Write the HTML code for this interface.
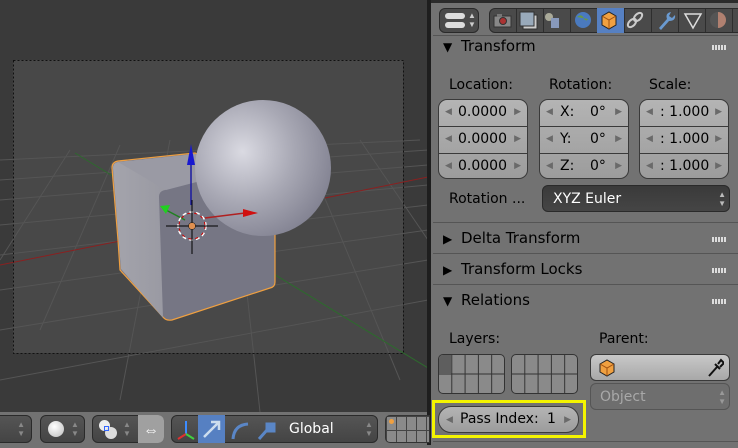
<!DOCTYPE html>
<html><head><style>
*{margin:0;padding:0;box-sizing:border-box}
body{width:738px;height:445px;overflow:hidden;background:#727272;font-family:"Liberation Sans","DejaVu Sans",sans-serif;position:relative}
.a{position:absolute}
.t{font-family:"DejaVu Sans","Liberation Sans",sans-serif;color:#000;font-size:14px}
.fld{position:absolute;background:linear-gradient(#b4b4b4,#9c9c9c);border:1px solid #3a3a3a;border-radius:9px;overflow:hidden}
.fld div{position:absolute;left:0;right:0;height:26px;border-top:1px solid #3a3a3a;font-family:"DejaVu Sans",sans-serif;font-size:14px;line-height:25px;color:#000}
.fld div:first-child{border-top:none}
.ar{position:absolute;color:#6a6a6a;font-size:9px}
.hdr{position:absolute;left:443px;font-family:"DejaVu Sans",sans-serif;font-size:15px;color:#000}
.hdr b{display:inline-block;width:18px;font-weight:normal;font-size:12px}
.grip{position:absolute;right:12px;width:14px;height:5px;background:repeating-linear-gradient(90deg,#ddd 0 2px,transparent 2px 3px)}
.sep{position:absolute;left:433px;right:0;height:1px;background:#555}
.btn{position:absolute;top:415px;height:28px;background:linear-gradient(#555,#444);border:1px solid #2a2a2a;border-radius:6px}
</style></head><body>
<svg class="a" style="left:0;top:0" width="428" height="445" viewBox="0 0 428 445">
<defs>
<radialGradient id="sp" cx="0.35" cy="0.38" r="0.75"><stop offset="0" stop-color="#dadae2"/><stop offset="0.5" stop-color="#a8a8b4"/><stop offset="1" stop-color="#7c7c8c"/></radialGradient>
<linearGradient id="cf" x1="0" x2="1"><stop offset="0" stop-color="#a4a4ac"/><stop offset="1" stop-color="#8c8c96"/></linearGradient>
</defs>
<rect width="428" height="445" fill="#3a3a3a"/>
<rect x="13" y="60" width="390" height="293" fill="#484848"/>
<g stroke="#555" stroke-width="1" fill="none">
<path d="M0 160L420 140M0 180L428 150M0 200L428 165M0 225L428 185M0 255L428 205M0 290L428 230M0 330L428 260M0 380L428 300"/>
<path d="M70 150L0 260M120 145L40 330M170 140L120 400M230 138L260 412M300 138L400 380M360 140L428 240"/>
</g>
<path d="M0 265L135 238M325 198L428 177" stroke="#8a2020" stroke-width="1"/>
<path d="M75 153L428 368" stroke="#2d6a2d" stroke-width="1"/>
<rect x="13.5" y="60.5" width="390" height="293" fill="none" stroke="#111" stroke-dasharray="2,2"/>
<path d="M112 168Q112 162 118 161L195 153L275 195L275 282Q275 287 270 288L172 320Q166 321 163 317L120 270L118 240Z" fill="#767684" stroke="#f0a040" stroke-width="1.2"/>
<path d="M113 168Q113 163 118 162L195 154L230 170L165 190Q159 191 159 197L163 318L121 269Z" fill="url(#cf)"/>
<path d="M118 162L195 154L235 172L166 190Z" fill="#9a9aa4"/>
<circle cx="263" cy="168" r="68" fill="url(#sp)"/>
<line x1="191" y1="163" x2="191" y2="205" stroke="#1a1aa0" stroke-width="1.5"/>
<path d="M187 165L191 144L195 165Z" fill="#1818d0"/>
<line x1="205" y1="218" x2="245" y2="213" stroke="#b02020" stroke-width="1.5"/>
<path d="M243 209L258 213L243 217Z" fill="#d01010"/>
<line x1="166" y1="210" x2="185" y2="220" stroke="#208020" stroke-width="1.5"/>
<path d="M160 206L170 205L166 214Z" fill="#20d020"/>
<circle cx="192" cy="226" r="14" fill="none" stroke="#fff" stroke-width="1.5" stroke-dasharray="4,3"/>
<circle cx="192" cy="226" r="13" fill="none" stroke="#c00" stroke-width="1" stroke-dasharray="3,4"/>
<path d="M166 226H218M192 200V254" stroke="#000" stroke-width="1"/>
<circle cx="192" cy="226" r="3.5" fill="#e09050" stroke="#000" stroke-width="0.5"/>
<rect x="0" y="412" width="428" height="33" fill="#727272"/>
</svg>
<div class="a" style="left:427px;top:0;width:4px;height:445px;background:#1e1e1e"></div>
<div class="a" style="left:431px;top:0;width:307px;height:3px;background:#2b2b2b"></div>
<div class="btn" style="left:-8px;width:40px"><span class="a" style="right:6px;top:4px;color:#888;font-size:8px;line-height:9px">▲<br>▼</span></div>
<div class="btn" style="left:40px;width:45px"><div class="a" style="left:7px;top:5px;width:16px;height:16px;border-radius:50%;background:radial-gradient(circle at 40% 35%,#fff,#bbb)"></div><span class="a" style="left:30px;top:4px;color:#888;font-size:8px;line-height:9px">▲<br>▼</span></div>
<div class="btn" style="left:92px;width:72px"><div class="a" style="left:6px;top:4px;width:11px;height:11px;border-radius:50%;background:#eee"></div><div class="a" style="left:12px;top:11px;width:12px;height:12px;border-radius:50%;background:#ddd"></div><div class="a" style="left:11px;top:10px;width:5px;height:5px;border:1px solid #36f"></div><span class="a" style="left:30px;top:4px;color:#888;font-size:8px;line-height:9px">▲<br>▼</span><div class="a" style="left:45px;top:-1px;width:26px;height:28px;background:#a0a0a0;border-radius:0 6px 6px 0;color:#fff;font-size:16px;text-align:center;line-height:32px">⇔</div></div>
<div class="btn" style="left:171px;width:207px">
<svg class="a" style="left:2px;top:3px" width="24" height="22"><path d="M12 2V15" stroke="#3c8cff" stroke-width="2"/><path d="M12 15L4 20" stroke="#e03030" stroke-width="2"/><path d="M12 15L20 20" stroke="#40d040" stroke-width="2"/></svg>
<div class="a" style="left:26px;top:-1px;width:27px;height:28px;background:#5680c2"><svg width="27" height="28"><path d="M6 22L20 8M13 7H21V15" stroke="#cde" stroke-width="2.5" fill="none"/></svg></div>
<svg class="a" style="left:56px;top:3px" width="24" height="22"><path d="M5 20Q6 6 20 5" stroke="#5a86c6" stroke-width="3" fill="none"/></svg>
<svg class="a" style="left:82px;top:3px" width="24" height="22"><path d="M5 20L13 11V5H20V12H13" stroke="#5a86c6" stroke-width="3" fill="#5a86c6"/></svg>
<span class="a t" style="left:117px;top:5px;color:#fff;font-size:14px">Global</span><span class="a" style="left:193px;top:4px;color:#888;font-size:8px;line-height:9px">▲<br>▼</span></div>
<div class="a" style="left:385px;top:415px;width:45px;height:28px;background:#8a8a8a;border:1px solid #333;border-radius:5px 0 0 5px;background-image:linear-gradient(90deg,#444 1px,transparent 1px),linear-gradient(#444 1px,transparent 1px);background-size:10px 14px"><div class="a" style="left:3px;top:3px;width:5px;height:5px;background:#f0a040;border-radius:50%"></div></div>
<div class="a" style="left:439px;top:8px;width:40px;height:25px;background:#4a4a4a;border:1px solid #2a2a2a;border-radius:6px"><div class="a" style="left:5px;top:4px;width:20px;height:6px;border-radius:3px;background:#ddd"></div><div class="a" style="left:5px;top:13px;width:20px;height:6px;border-radius:3px;background:#ddd"></div><span class="a" style="left:28px;top:2px;color:#ccc;font-size:8px;line-height:9px">▲<br>▼</span></div>
<div class="a" style="left:489px;top:8px;width:260px;height:25px;background:#4a4a4a;border:1px solid #2a2a2a;border-radius:6px 0 0 6px;background-image:linear-gradient(90deg,transparent 26px,#2e2e2e 26px,#2e2e2e 27px);background-size:27px 25px"></div>
<div class="a" style="left:597px;top:8px;width:27px;height:25px;background:#5680c2"></div>
<svg class="a" style="left:489px;top:8px" width="249" height="25">
<rect x="5" y="8" width="17" height="11" fill="#888" stroke="#333"/><rect x="8" y="6" width="5" height="3" fill="#777"/><circle cx="14" cy="13" r="3.5" fill="#a33" stroke="#333"/>
<rect x="34" y="7" width="14" height="14" fill="#ccc" stroke="#333"/><rect x="31" y="4" width="14" height="14" fill="#9ab" stroke="#333"/>
<circle cx="60" cy="9" r="4" fill="#aa9"/><rect x="62" y="10" width="8" height="10" fill="#89b"/>
<circle cx="94" cy="12" r="8" fill="#4a7abf"/><path d="M88 9q5-4 7 2q3 3 4 0" fill="#6a9a40"/>
<path d="M113 8L120 4L127 8V17L120 21L113 17Z" fill="#f0a040" stroke="#222"/><path d="M113 8L120 12L127 8M120 12V21" stroke="#a05010" fill="none"/>
<ellipse cx="143" cy="15" rx="5" ry="3" fill="none" stroke="#ccc" stroke-width="2" transform="rotate(-45 143 15)"/><ellipse cx="149" cy="9" rx="5" ry="3" fill="none" stroke="#ccc" stroke-width="2" transform="rotate(-45 149 9)"/>
<path d="M170 20l8-9q-2-6 4-7l-2 4 3 2 3-3q1 6-6 6l-8 9z" fill="#6a9ad0"/>
<path d="M196 6H212L204 20Z" fill="none" stroke="#ddd" stroke-width="1.5"/>
<circle cx="229" cy="12" r="8" fill="#555"/><path d="M229 4a8 8 0 0 1 0 16z" fill="#b08070"/>
</svg>
<div class="a" style="left:433px;top:35px;width:305px;height:1px;background:#555"></div>
<span class="hdr" style="top:37px"><b>▼</b>Transform</span><div class="grip" style="top:45px"></div>
<span class="a t" style="left:449px;top:77px">Location:</span>
<span class="a t" style="left:549px;top:77px">Rotation:</span>
<span class="a t" style="left:649px;top:77px">Scale:</span>
<div class="fld" style="left:438px;top:99px;width:90px;height:80px"><div style="top:0"><span class="ar" style="left:6px">◀</span><span style="position:absolute;left:19px">0.0000</span><span class="ar" style="right:6px">▶</span></div><div style="top:26px"><span class="ar" style="left:6px">◀</span><span style="position:absolute;left:19px">0.0000</span><span class="ar" style="right:6px">▶</span></div><div style="top:53px"><span class="ar" style="left:6px">◀</span><span style="position:absolute;left:19px">0.0000</span><span class="ar" style="right:6px">▶</span></div></div>
<div class="fld" style="left:539px;top:99px;width:90px;height:80px"><div style="top:0"><span class="ar" style="left:6px">◀</span><span style="position:absolute;left:20px">X:</span><span style="position:absolute;left:50px">0°</span><span class="ar" style="right:6px">▶</span></div><div style="top:26px"><span class="ar" style="left:6px">◀</span><span style="position:absolute;left:20px">Y:</span><span style="position:absolute;left:50px">0°</span><span class="ar" style="right:6px">▶</span></div><div style="top:53px"><span class="ar" style="left:6px">◀</span><span style="position:absolute;left:20px">Z:</span><span style="position:absolute;left:50px">0°</span><span class="ar" style="right:6px">▶</span></div></div>
<div class="fld" style="left:639px;top:99px;width:90px;height:80px"><div style="top:0"><span class="ar" style="left:6px">◀</span><span style="position:absolute;left:20px">: 1.000</span><span class="ar" style="right:6px">▶</span></div><div style="top:26px"><span class="ar" style="left:6px">◀</span><span style="position:absolute;left:20px">: 1.000</span><span class="ar" style="right:6px">▶</span></div><div style="top:53px"><span class="ar" style="left:6px">◀</span><span style="position:absolute;left:20px">: 1.000</span><span class="ar" style="right:6px">▶</span></div></div>
<span class="a t" style="left:449px;top:191px">Rotation ...</span>
<div class="a" style="left:542px;top:185px;width:188px;height:27px;background:linear-gradient(#3a3a3a,#454545);border:1px solid #2a2a2a;border-radius:6px"><span class="a t" style="left:10px;top:5px;color:#fff">XYZ Euler</span><span class="a" style="right:3px;top:4px;color:#bbb;font-size:8px;line-height:9px">▲<br>▼</span></div>
<div class="sep" style="top:222px"></div>
<span class="hdr" style="top:229px"><b>▶</b>Delta Transform</span><div class="grip" style="top:237px"></div>
<div class="sep" style="top:253px"></div>
<span class="hdr" style="top:260px"><b>▶</b>Transform Locks</span><div class="grip" style="top:268px"></div>
<div class="sep" style="top:284px"></div>
<span class="hdr" style="top:291px"><b>▼</b>Relations</span><div class="grip" style="top:299px"></div>
<span class="a t" style="left:449px;top:331px">Layers:</span>
<span class="a t" style="left:599px;top:331px">Parent:</span>
<div class="a" style="left:438px;top:354px;width:67px;height:40px;background:#8a8a8a;border:1px solid #333;border-radius:5px;background-image:linear-gradient(90deg,#333 1px,transparent 1px),linear-gradient(#333 1px,transparent 1px);background-size:13.3px 19.5px;background-position:-1px -1px"><div class="a" style="left:0;top:0;width:12px;height:19px;background:#5e5e5e;border-radius:4px 0 0 0"></div></div>
<div class="a" style="left:511px;top:354px;width:67px;height:40px;background:#8a8a8a;border:1px solid #333;border-radius:5px;background-image:linear-gradient(90deg,#333 1px,transparent 1px),linear-gradient(#333 1px,transparent 1px);background-size:13.3px 19.5px;background-position:-1px -1px"></div>
<div class="a" style="left:590px;top:354px;width:140px;height:27px;background:linear-gradient(#c8c8c8,#a8a8a8);border:1px solid #3a3a3a;border-radius:6px"><svg class="a" style="left:7px;top:4px" width="18" height="18"><path d="M2 5L9 1L16 5V13L9 17L2 13Z" fill="#f0a040" stroke="#222"/><path d="M2 5L9 9L16 5M9 9V17" stroke="#a05010" fill="none"/></svg><svg class="a" style="right:5px;top:3px" width="18" height="20"><path d="M3 18L11 9M9 6L14 11M12 6L15 2L18 5L14 9" stroke="#111" stroke-width="2" fill="none"/></svg></div>
<div class="a" style="left:590px;top:383px;width:140px;height:27px;background:#6e6e6e;border:1px solid #555;border-radius:6px"><span class="a t" style="left:9px;top:5px;color:#a8a8a8">Object</span><span class="a" style="right:3px;top:4px;color:#999;font-size:8px;line-height:9px">▲<br>▼</span></div>
<div class="a" style="left:432px;top:400px;width:154px;height:38px;border:3px solid #f4f400"></div>
<div class="fld" style="left:438px;top:406px;width:141px;height:27px;border-radius:13px"><span class="ar" style="left:7px;top:7px">◀</span><span class="a t" style="left:21px;top:4px">Pass Index:</span><span class="a t" style="left:108px;top:4px">1</span><span class="ar" style="right:7px;top:7px">▶</span></div>
<div class="sep" style="top:441px"></div>
</body></html>
